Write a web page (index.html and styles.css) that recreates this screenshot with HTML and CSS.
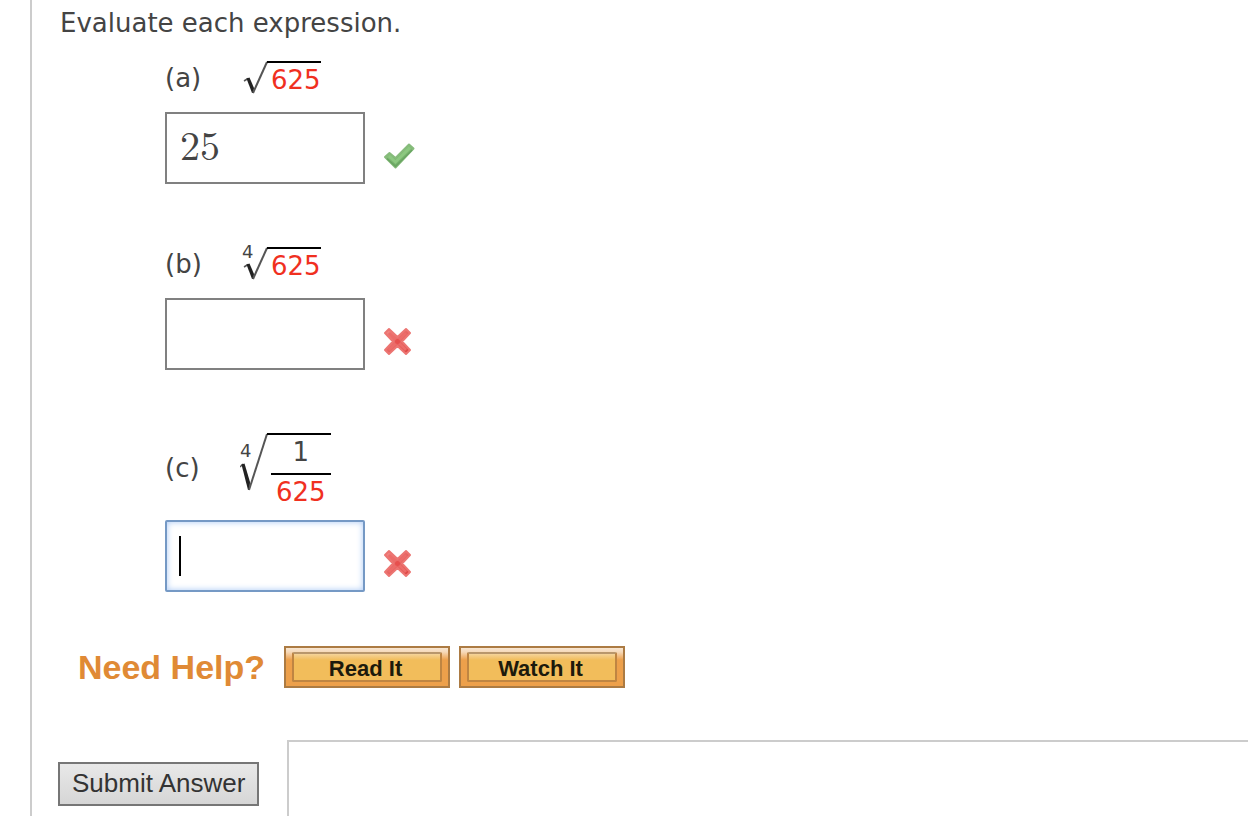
FILE: index.html
```html
<!DOCTYPE html>
<html lang="en">
<head>
    <meta charset="UTF-8">
    <meta name="viewport" content="width=device-width, initial-scale=1.0">
    <title>Evaluate each expression</title>
    <link rel="stylesheet" href="styles.css">
</head>
<body>

<svg class="defs" aria-hidden="true">
    <defs>
        <linearGradient id="green" x1="0" y1="0" x2="0.6" y2="1">
            <stop offset="0" stop-color="#9bcd8c"/>
            <stop offset="1" stop-color="#69a961"/>
        </linearGradient>
        <linearGradient id="red" x1="0" y1="0" x2="1" y2="1">
            <stop offset="0" stop-color="#f28c8a"/>
            <stop offset="1" stop-color="#dc3f3c"/>
        </linearGradient>
        <symbol id="check" viewBox="0 0 32 32">
            <path d="M2 17L6.500 13L12.500 18L26 4.500L30.500 8.500L12.500 27.500Z" fill="url(#green)" stroke="#86bb7b" stroke-width="2" stroke-linejoin="round"/>
            <path d="M6 16L12.500 22L27 7.500" fill="none" stroke="#8cc880" stroke-width="3"/>
            <path d="M4 18.500L12.500 26.500L29 10" fill="none" stroke="#68a461" stroke-width="1.500"/>
        </symbol>
        <symbol id="cross" viewBox="0 0 32 32">
            <path d="M6 3L14.500 11L23 3L27 7L19 15.500L27 24L23 28L14.500 20L6 28L2 24L10 15.500L2 7Z" fill="url(#red)" stroke="#ec7572" stroke-width="2" stroke-linejoin="round"/>
            <path d="M6 7L23 24M23 7L6 24" fill="none" stroke="#ec6c69" stroke-width="3"/>
            <circle cx="14.500" cy="15.500" r="2.500" fill="#e6504e"/>
        </symbol>
        <symbol id="surd" viewBox="0 0 28 34">
            <path d="M4 20L8 17.500" fill="none" stroke="#555" stroke-width="1.500"/>
            <path d="M6.500 17.500L9.500 16.500L14 27L13.500 32L12 32Z" fill="#222"/>
            <path d="M13 32L27 1" fill="none" stroke="#555" stroke-width="2"/>
        </symbol>
        <symbol id="surd-tall" viewBox="0 0 28 70">
            <path d="M0 34L3 31" fill="none" stroke="#555" stroke-width="1.500"/>
            <path d="M1.500 31.500L4.500 30.500L10 49L9.500 57L8 57Z" fill="#222"/>
            <path d="M9 57L27 1" fill="none" stroke="#555" stroke-width="2"/>
        </symbol>
    </defs>
</svg>

<main class="question">
    <h1 class="title">Evaluate each expression.</h1>

    <form class="answers" id="answers">
        <div class="part">
            <div class="prompt">
                <label class="letter" for="answer-a">(a)</label>
                <div class="root">
                    <svg class="surd" viewBox="0 0 28 34"><use href="#surd"/></svg>
                    <span class="radicand value">625</span>
                </div>
            </div>
            <div class="field">
                <input class="answer" type="text" id="answer-a" value="25">
                <svg class="mark" role="img" aria-label="Correct"><use href="#check"/></svg>
            </div>
        </div>

        <div class="part">
            <div class="prompt">
                <label class="letter" for="answer-b">(b)</label>
                <div class="root">
                    <span class="index">4</span>
                    <svg class="surd" viewBox="0 0 28 34"><use href="#surd"/></svg>
                    <span class="radicand value">625</span>
                </div>
            </div>
            <div class="field">
                <input class="answer" type="text" id="answer-b">
                <svg class="mark" role="img" aria-label="Incorrect"><use href="#cross"/></svg>
            </div>
        </div>

        <div class="part">
            <div class="prompt">
                <label class="letter" for="answer-c">(c)</label>
                <div class="root tall">
                    <span class="index">4</span>
                    <svg class="surd" viewBox="0 0 28 70"><use href="#surd-tall"/></svg>
                    <span class="radicand fraction">
                        <span class="numerator">1</span>
                        <span class="denominator value">625</span>
                    </span>
                </div>
            </div>
            <div class="field">
                <input class="answer active" type="text" id="answer-c">
                <span class="caret"></span>
                <svg class="mark" role="img" aria-label="Incorrect"><use href="#cross"/></svg>
            </div>
        </div>
    </form>

    <div class="help">
        <span class="help-title">Need Help?</span>
        <button class="help-button" type="button">Read It</button>
        <button class="help-button" type="button">Watch It</button>
    </div>

    <div class="footer">
        <button class="submit" type="submit" form="answers">Submit Answer</button>
        <div class="panel"></div>
    </div>
</main>

</body>
</html>
```
FILE: styles.css
```css
* {
    box-sizing: border-box;
}
body {
    margin: 0;
    background-color: #fff;
    color: #444;
    font-family: Verdana, "DejaVu Sans", sans-serif;
    font-size: 26px;
}
.defs {
    position: absolute;
    width: 0;
    height: 0;
}
.question {
    display: flex;
    flex-direction: column;
    min-height: 100vh;
    margin-left: 30px;
    border-left: 2px solid #ccc;
}
.title {
    margin: 0 0 14px;
    padding-left: 28px;
    font-size: 26px;
    font-weight: normal;
    line-height: 46px;
}
.answers {
    display: flex;
    flex-direction: column;
    gap: 62px;
    padding-left: 133px;
}

/* expressions */
.prompt {
    display: flex;
    align-items: center;
    padding: 1px 0 17px;
}
.letter {
    width: 75px;
    line-height: 34px;
}
.root {
    position: relative;
    display: flex;
}
.surd {
    width: 28px;
    height: 34px;
}
.index {
    position: absolute;
    top: -5px;
    left: 2px;
    font-size: 18px;
    line-height: 20px;
}
.radicand {
    margin-left: -1px;
    padding: 2px 0 0 4px;
    border-top: 2px solid #000;
    line-height: 30px;
}
.value {
    color: #f0301f;
}
.tall .surd {
    height: 70px;
}
.tall .index {
    top: 8px;
    left: 0;
}
.fraction {
    display: flex;
    flex-direction: column;
    padding-top: 0;
    text-align: center;
}
.numerator {
    padding-bottom: 4px;
    line-height: 34px;
    border-bottom: 2px solid #000;
}
.denominator {
    padding: 6px 5px 0;
    line-height: 22px;
}

/* answer boxes */
.field {
    position: relative;
    display: flex;
    align-items: flex-end;
    gap: 18px;
}
.answer {
    width: 200px;
    height: 72px;
    padding: 0 13px 10px;
    border: 2px solid #808080;
    background-color: #fff;
    color: #444;
    font-family: "Latin Modern Roman", "Liberation Serif", serif;
    font-size: 40px;
    outline: none;
}
.active {
    border-color: #7599c5;
    border-radius: 2px;
    box-shadow: inset 0 0 6px #a9c8f5;
    caret-color: transparent;
}
.caret {
    position: absolute;
    top: 16px;
    left: 14px;
    width: 2px;
    height: 40px;
    background-color: #000;
}
.mark {
    width: 32px;
    height: 32px;
    margin-bottom: 12px;
}

/* help */
.help {
    display: flex;
    align-items: center;
    gap: 9px;
    margin-top: 54px;
    padding-left: 46px;
}
.help-title {
    margin-right: 10px;
    color: #e08a35;
    font-family: Arial, "Liberation Sans", sans-serif;
    font-size: 34px;
    font-weight: bold;
    line-height: 42px;
}
.help-button {
    position: relative;
    width: 166px;
    height: 42px;
    padding: 4px 3px 0 0;
    border: 2px solid #ac7b43;
    background: linear-gradient(#f8e6d2, #f6d9b9 4px, #eda04b 12px);
    color: #1c1a0c;
    font-family: Arial, "Liberation Sans", sans-serif;
    font-size: 22px;
    font-weight: bold;
    z-index: 0;
}
.help-button::before {
    content: "";
    position: absolute;
    inset: 4px 6px;
    border: 2px solid #bf8542;
    border-top-color: #b9976c;
    border-radius: 2px;
    background: linear-gradient(#f5d39a, #f2bd5b 6px);
    z-index: -1;
}

/* submit */
.footer {
    display: flex;
    flex: 1;
    gap: 28px;
    margin-top: 52px;
    padding-left: 26px;
}
.submit {
    align-self: flex-start;
    height: 44px;
    margin-top: 22px;
    padding: 0 12px 2px;
    border: 2px solid #767676;
    background: linear-gradient(#e8e8e8, #d6d6d6);
    color: #333;
    font-family: Arial, "Liberation Sans", sans-serif;
    font-size: 26px;
}
.panel {
    flex: 1;
    min-height: 76px;
    border-top: 2px solid #ccc;
    border-left: 2px solid #ccc;
}
```
